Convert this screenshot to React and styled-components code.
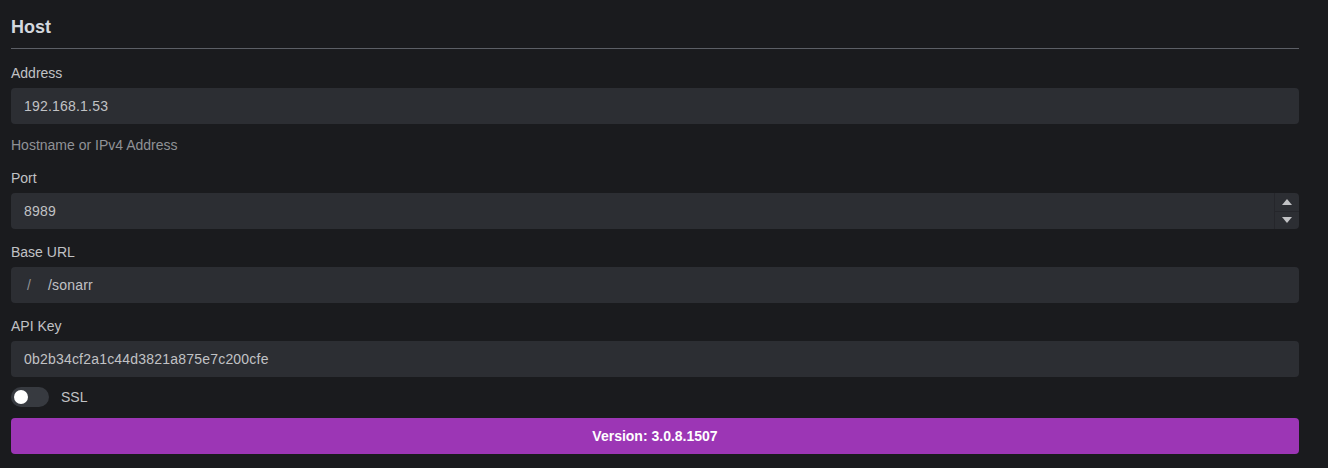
import React from "react";
import styled, { createGlobalStyle } from "styled-components";

const Global = createGlobalStyle`
  html, body { margin: 0; padding: 0; background: #1a1b1e; }
  body { font-family: "Liberation Sans", Arial, sans-serif; color: #c1c2c5; }
  * { box-sizing: border-box; }
`;

const Page = styled.div`
  width: 1299px;
  padding: 15px 0 14px 11px;
  display: flex;
  flex-direction: column;
`;

const Heading = styled.h2`
  margin: 0;
  font-size: 18px;
  line-height: 24px;
  font-weight: 700;
  color: #d3d8de;
  padding-bottom: 9px;
  border-bottom: 1px solid #5c5f66;
`;

const Form = styled.div`
  display: flex;
  flex-direction: column;
  padding-top: 14px;
`;

const Field = styled.div`
  display: flex;
  flex-direction: column;
  margin-top: ${(p) => p.$mt ?? 13}px;
`;

const Label = styled.label`
  font-size: 14px;
  line-height: 20px;
  color: #c1c2c5;
  margin-bottom: 5px;
`;

const InputBox = styled.div`
  height: 36px;
  background: #2c2e33;
  border-radius: 4px;
  display: flex;
  align-items: center;
  font-size: 14px;
  letter-spacing: 0.2px;
  color: #c1c2c5;
  overflow: hidden;
`;

const Value = styled.span`
  flex: 1;
  padding-left: ${(p) => p.$pl ?? 13}px;
`;

const Prefix = styled.span`
  width: 37px;
  padding-left: 16px;
  color: #909296;
`;

const Spinner = styled.div`
  width: 25px;
  height: 100%;
  border-left: 1px solid #25262b;
  display: flex;
  flex-direction: column;
`;

const SpinBtn = styled.div`
  flex: 1;
  display: flex;
  align-items: center;
  justify-content: center;
  & + & { border-top: 1px solid #25262b; }
`;

const Helper = styled.div`
  font-size: 14px;
  line-height: 20px;
  color: #909296;
  margin-top: 11px;
`;

const ToggleRow = styled.div`
  display: flex;
  align-items: center;
  gap: 12px;
  margin-top: 10px;
  font-size: 14px;
  color: #c1c2c5;
`;

const Track = styled.div`
  width: 38px;
  height: 20px;
  border-radius: 10px;
  background: #373a40;
  display: flex;
  align-items: center;
  padding-left: 3px;
`;

const Knob = styled.div`
  width: 14px;
  height: 14px;
  border-radius: 50%;
  background: #ffffff;
`;

const Button = styled.button`
  margin-top: 11px;
  height: 36px;
  border: 0;
  border-radius: 4px;
  background: #9c36b5;
  color: #ffffff;
  font-family: "Liberation Sans", Arial, sans-serif;
  font-size: 14px;
  font-weight: 700;
  cursor: pointer;
`;

const Arrow = ({ up }) => (
  <svg width="10" height="6" viewBox="0 0 10 6">
    <path d={up ? "M0 6 L5 0 L10 6 Z" : "M0 0 L10 0 L5 6 Z"} fill="#c1c2c5" />
  </svg>
);

export default function App() {
  return (
    <>
      <Global />
      <Page>
        <Heading>Host</Heading>
        <Form>
          <Field $mt={0}>
            <Label>Address</Label>
            <InputBox>
              <Value>192.168.1.53</Value>
            </InputBox>
          </Field>
          <Helper>Hostname or IPv4 Address</Helper>
          <Field>
            <Label>Port</Label>
            <InputBox>
              <Value>8989</Value>
              <Spinner>
                <SpinBtn>
                  <Arrow up />
                </SpinBtn>
                <SpinBtn>
                  <Arrow />
                </SpinBtn>
              </Spinner>
            </InputBox>
          </Field>
          <Field>
            <Label>Base URL</Label>
            <InputBox>
              <Prefix>/</Prefix>
              <Value $pl={0}>/sonarr</Value>
            </InputBox>
          </Field>
          <Field>
            <Label>API Key</Label>
            <InputBox>
              <Value>0b2b34cf2a1c44d3821a875e7c200cfe</Value>
            </InputBox>
          </Field>
          <ToggleRow>
            <Track>
              <Knob />
            </Track>
            SSL
          </ToggleRow>
          <Button>Version: 3.0.8.1507</Button>
        </Form>
      </Page>
    </>
  );
}
